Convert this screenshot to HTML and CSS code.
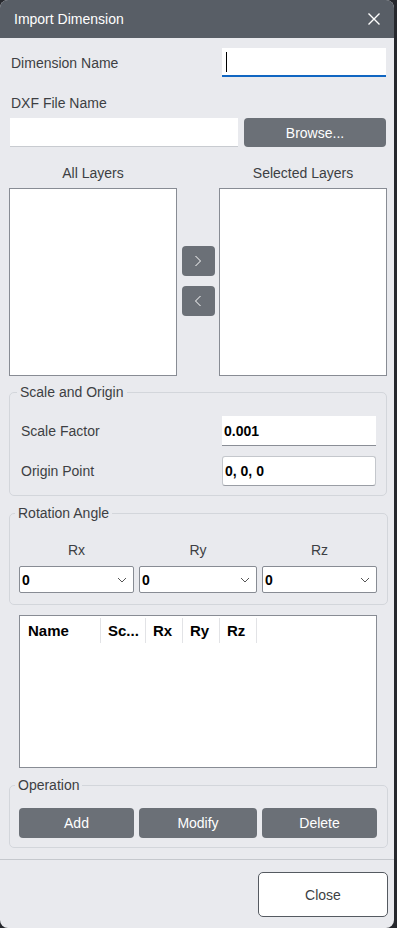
FILE: index.html
```html
<!DOCTYPE html>
<html lang="en">

<head>
    <meta charset="UTF-8">
    <meta name="viewport" content="width=device-width, initial-scale=1.0">
    <title>Import Dimension</title>
    <link rel="stylesheet" href="styles.css">
</head>

<body>
    <div class="okno">
        <!-- Pasek tytułu -->
        <div class="tytul">
            <span>Import Dimension</span>
            <svg class="zamknij" width="14" height="14" viewBox="0 0 14 14">
                <path d="M1.5 1.5 L12.5 12.5 M12.5 1.5 L1.5 12.5" stroke="#fff" stroke-width="1.4" fill="none" />
            </svg>
        </div>

        <div class="tresc">
            <div class="wiersz">
                <label class="etykieta">Dimension Name</label>
                <div class="pole aktywne"><span class="kursor"></span></div>
            </div>

            <div class="etykieta dxf">DXF File Name</div>
            <div class="wiersz-plik">
                <div class="pole plik"></div>
                <button class="przycisk browse">Browse...</button>
            </div>

            <!-- Warstwy -->
            <div class="warstwy">
                <div class="kolumna">
                    <div class="naglowek">All Layers</div>
                    <div class="lista"></div>
                </div>
                <div class="strzalki">
                    <button class="przycisk strzalka">
                        <svg width="10" height="12" viewBox="0 0 10 12"><path d="M2.5 1 L7.5 6 L2.5 11" stroke="#fff" stroke-width="1" fill="none" /></svg>
                    </button>
                    <button class="przycisk strzalka">
                        <svg width="10" height="12" viewBox="0 0 10 12"><path d="M7.5 1 L2.5 6 L7.5 11" stroke="#fff" stroke-width="1" fill="none" /></svg>
                    </button>
                </div>
                <div class="kolumna">
                    <div class="naglowek">Selected Layers</div>
                    <div class="lista"></div>
                </div>
            </div>

            <!-- Skala i punkt początkowy -->
            <fieldset class="grupa skala">
                <legend>Scale and Origin</legend>
                <div class="wiersz-grupa">
                    <span>Scale Factor</span>
                    <div class="wartosc podkreslona">0.001</div>
                </div>
                <div class="wiersz-grupa">
                    <span>Origin Point</span>
                    <div class="wartosc ramka">0, 0, 0</div>
                </div>
            </fieldset>

            <!-- Obrót -->
            <fieldset class="grupa obrot">
                <legend>Rotation Angle</legend>
                <div class="osie">
                    <div class="os">
                        <div class="os-nazwa">Rx</div>
                        <div class="combo">0<svg width="10" height="6" viewBox="0 0 10 6"><path d="M1 1 L5 5 L9 1" stroke="#555" stroke-width="1" fill="none" /></svg></div>
                    </div>
                    <div class="os srodek">
                        <div class="os-nazwa">Ry</div>
                        <div class="combo">0<svg width="10" height="6" viewBox="0 0 10 6"><path d="M1 1 L5 5 L9 1" stroke="#555" stroke-width="1" fill="none" /></svg></div>
                    </div>
                    <div class="os">
                        <div class="os-nazwa">Rz</div>
                        <div class="combo">0<svg width="10" height="6" viewBox="0 0 10 6"><path d="M1 1 L5 5 L9 1" stroke="#555" stroke-width="1" fill="none" /></svg></div>
                    </div>
                </div>
            </fieldset>

            <!-- Tabela -->
            <div class="tabela">
                <div class="tabela-naglowek">
                    <div class="kol kol-name">Name</div>
                    <div class="kol kol-sc">Sc...</div>
                    <div class="kol kol-r">Rx</div>
                    <div class="kol kol-r">Ry</div>
                    <div class="kol kol-r">Rz</div>
                </div>
            </div>

            <!-- Operacje -->
            <fieldset class="grupa operacje">
                <legend>Operation</legend>
                <div class="przyciski">
                    <button class="przycisk op">Add</button>
                    <button class="przycisk op srodek">Modify</button>
                    <button class="przycisk op">Delete</button>
                </div>
            </fieldset>
        </div>

        <div class="stopka">
            <button class="close">Close</button>
        </div>
    </div>
</body>

</html>
```

FILE: styles.css
```css
/* Cała strona */
* {
    box-sizing: border-box;
}

body {
    margin: 0;
    padding: 0;
    height: 928px;
    overflow: hidden;
    background-color: #26282d;
    font-family: "Liberation Sans", Arial, sans-serif;
    font-size: 14px;
    color: #3d3f43;
}

/* Okno dialogowe */
.okno {
    width: 394px;
    height: 928px;
    background-color: #e9eaee;
    border-radius: 8px;
    overflow: hidden;
}

.tytul {
    height: 38px;
    background-color: #585e66;
    color: #fff;
    display: flex;
    align-items: center;
    justify-content: space-between;
    padding: 0 13px 0 14px;
}

.tresc {
    padding: 10px 7px 0 9px;
}

.wiersz {
    display: flex;
    align-items: center;
    justify-content: space-between;
    height: 29px;
}

.etykieta {
    padding-left: 2px;
}

.pole {
    background-color: #fff;
    height: 29px;
}

.aktywne {
    width: 164px;
    margin-right: 1px;
    border-bottom: 2px solid #1066c2;
    display: flex;
    align-items: center;
    padding-left: 4px;
}

.kursor {
    width: 1px;
    height: 20px;
    background-color: #000;
}

.dxf {
    margin-top: 17px;
    height: 18px;
    line-height: 18px;
}

.wiersz-plik {
    display: flex;
    gap: 6px;
    margin-top: 6px;
    padding-left: 1px;
}

.plik {
    width: 228px;
    border-bottom: 1px solid #c8cbd0;
}

/* Przyciski szare */
.przycisk {
    background-color: #6b7077;
    color: #fff;
    border: none;
    border-radius: 4px;
    font-family: inherit;
    font-size: 14px;
    padding: 0;
}

.browse {
    width: 142px;
    height: 29px;
}

/* Listy warstw */
.warstwy {
    display: flex;
    margin-top: 17px;
}

.kolumna {
    width: 168px;
}

.naglowek {
    text-align: center;
    height: 18px;
    line-height: 18px;
    margin-bottom: 6px;
}

.lista {
    height: 188px;
    background-color: #fff;
    border: 1px solid #888c94;
}

.strzalki {
    width: 42px;
    display: flex;
    flex-direction: column;
    align-items: center;
    justify-content: center;
    gap: 10px;
    padding-top: 22px;
}

.strzalka {
    width: 33px;
    height: 30px;
    display: flex;
    align-items: center;
    justify-content: center;
}

/* Ramki grup */
.grupa {
    margin: 0;
    border: 1px solid #d3d6db;
    border-radius: 5px;
    padding: 0 10px 0 11px;
}

.grupa legend {
    padding: 0 3px;
    margin-left: -4px;
    height: 16px;
    line-height: 16px;
}

.skala {
    margin-top: 8px;
    padding-top: 16px;
    padding-bottom: 9px;
}

.wiersz-grupa {
    display: flex;
    align-items: center;
    justify-content: space-between;
    height: 30px;
}

.wiersz-grupa + .wiersz-grupa {
    margin-top: 10px;
}

.wartosc {
    width: 154px;
    height: 30px;
    background-color: #fff;
    color: #000;
    font-weight: bold;
    display: flex;
    align-items: center;
    padding-left: 2px;
}

.podkreslona {
    border-bottom: 1px solid #8a8e96;
}

.ramka {
    border: 1px solid #c4c7cc;
    border-bottom-color: #9a9ea5;
    border-radius: 3px;
}

.obrot {
    margin-top: 9px;
    padding-top: 21px;
    padding-bottom: 11px;
    padding-left: 9px;
}

.osie {
    display: flex;
    gap: 5px;
}

.os {
    width: 115px;
}

.os.srodek {
    width: 118px;
}

.os-nazwa {
    text-align: center;
    height: 16px;
    line-height: 16px;
    margin-bottom: 8px;
}

.combo {
    height: 27px;
    background-color: #fff;
    border: 1px solid #888c94;
    border-radius: 2px;
    color: #000;
    font-weight: bold;
    display: flex;
    align-items: center;
    justify-content: space-between;
    padding: 0 6px 0 2px;
}

/* Tabela z wymiarami */
.tabela {
    margin: 10px 10px 0 10px;
    height: 153px;
    background-color: #fff;
    border: 1px solid #888c94;
}

.tabela-naglowek {
    display: flex;
    height: 27px;
    padding-top: 2px;
}

.kol {
    color: #000;
    font-weight: bold;
    font-size: 15px;
    border-right: 1px solid #e2e3e6;
    padding-left: 8px;
    display: flex;
    align-items: center;
}

.kol-name {
    width: 81px;
}

.kol-sc {
    width: 45px;
    padding-left: 7px;
}

.kol-r {
    width: 37px;
    padding-left: 7px;
}

.operacje {
    margin-top: 9px;
    padding-top: 15px;
    padding-bottom: 9px;
    padding-left: 9px;
}

.przyciski {
    display: flex;
    gap: 5px;
}

.op {
    width: 115px;
    height: 30px;
}

.op.srodek {
    width: 118px;
}

/* Stopka z przyciskiem zamknięcia */
.stopka {
    margin-top: 11px;
    border-top: 1px solid #c5c8cd;
    display: flex;
    justify-content: flex-end;
    padding: 12px 6px 0 0;
}

.close {
    width: 130px;
    height: 45px;
    background-color: #fff;
    border: 1px solid #555a61;
    border-radius: 5px;
    font-family: inherit;
    font-size: 14px;
    color: #3d3f43;
}
```
